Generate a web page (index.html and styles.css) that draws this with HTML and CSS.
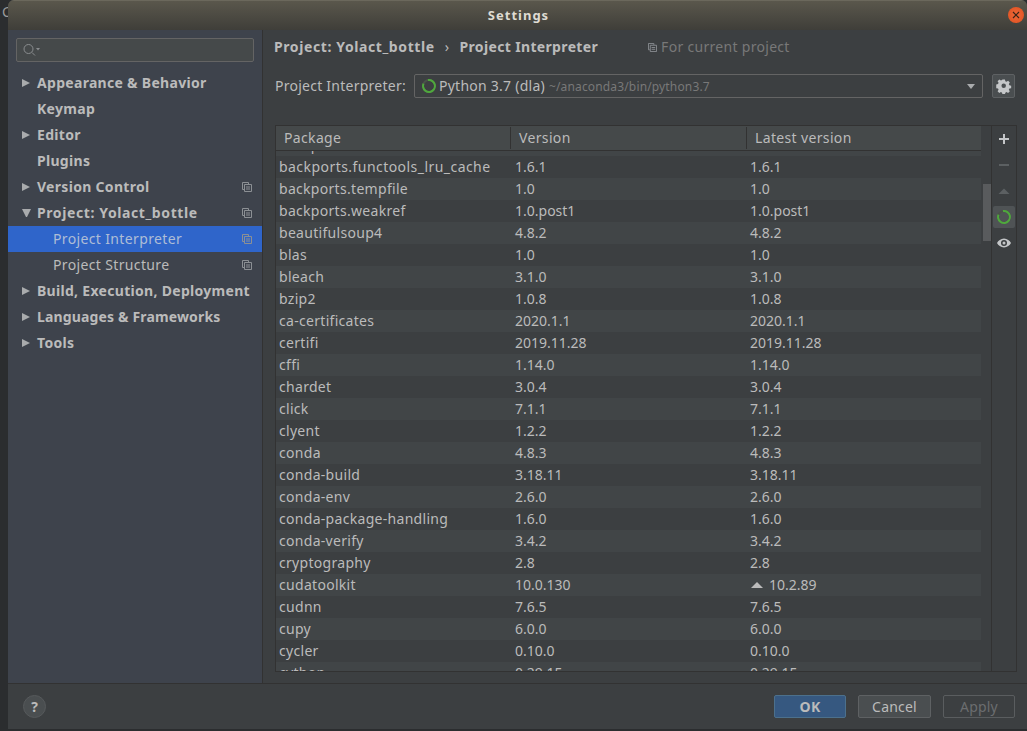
FILE: index.html
```html
<!DOCTYPE html>
<html lang="en">
<head>
<meta charset="utf-8">
<title>Settings</title>
<link rel="stylesheet" href="styles.css">
</head>
<body>
<svg class="defs" width="0" height="0">
  <symbol id="copy" viewBox="0 0 10 10"><path d="M0.5 0.5H6.5V2M2.5 2.5H9.5V9.5H2.5ZM0.5 0.5V7.5H2M4 5H8M4 7H8" fill="none" stroke="currentColor"/></symbol>
  <symbol id="spin" viewBox="0 0 16 16"><circle cx="8" cy="8" r="6" fill="none" stroke="#4b5249" stroke-width="2"/><circle cx="8" cy="8" r="6" fill="none" stroke="#4fa83d" stroke-width="2" stroke-dasharray="31 7" transform="rotate(-100 8 8)"/></symbol>
</svg>
<div class="backdrop"><span class="backdrop-letter">C</span></div>
<div class="dialog">
  <header class="titlebar">
    <span class="title">Settings</span>
    <span class="close"><svg width="8" height="8" viewBox="0 0 8 8"><path d="M1 1L7 7M7 1L1 7" stroke="#3a2418" stroke-width="1.2"/></svg></span>
  </header>
  <div class="main">
    <aside class="sidebar">
      <div class="search">
        <svg width="20" height="14" viewBox="0 0 20 14"><circle cx="6.5" cy="6" r="4.5" fill="none" stroke="#8a8d8f"/><path d="M10 9.5L13 12.5" stroke="#8a8d8f"/><path d="M14 5H18L16 7.5Z" fill="#8a8d8f"/></svg>
      </div>
      <nav class="tree">
        <div class="node"><i class="arrow"></i><b>Appearance &amp; Behavior</b></div>
        <div class="node"><i class="noarrow"></i><b>Keymap</b></div>
        <div class="node"><i class="arrow"></i><b>Editor</b></div>
        <div class="node"><i class="noarrow"></i><b>Plugins</b></div>
        <div class="node"><i class="arrow"></i><b>Version Control</b><svg class="copy"><use href="#copy"/></svg></div>
        <div class="node"><i class="arrow open"></i><b class="wide">Project: Yolact_bottle</b><svg class="copy"><use href="#copy"/></svg></div>
        <div class="node child selected"><span>Project Interpreter</span><svg class="copy"><use href="#copy"/></svg></div>
        <div class="node child"><span>Project Structure</span><svg class="copy"><use href="#copy"/></svg></div>
        <div class="node"><i class="arrow"></i><b>Build, Execution, Deployment</b></div>
        <div class="node"><i class="arrow"></i><b class="narrow">Languages &amp; Frameworks</b></div>
        <div class="node"><i class="arrow"></i><b>Tools</b></div>
      </nav>
    </aside>
    <section class="content">
      <div class="crumbs">
        <b class="wide">Project: Yolact_bottle</b><span class="sep">›</span><b>Project Interpreter</b>
        <span class="scope"><svg class="copy"><use href="#copy"/></svg>For current project</span>
      </div>
      <div class="interp">
        <label class="interp-label">Project Interpreter:</label>
        <div class="combo">
          <svg class="spin" width="16" height="16"><use href="#spin"/></svg>
          <span class="py">Python 3.7 (dla)</span><span class="path">~/anaconda3/bin/python3.7</span>
          <i class="caret"></i>
        </div>
        <button class="gear" type="button"><svg width="16" height="16" viewBox="0 0 16 16"><path fill-rule="evenodd" fill="#c4c6c8" d="M6.6 1h2.8l.4 2 1.3.6 1.8-1.1 1.9 1.9-1.1 1.8.6 1.4 2 .4v2.7l-2 .4-.6 1.4 1.1 1.8-1.9 1.9-1.8-1.1-1.3.6-.4 2H6.6l-.4-2-1.3-.6-1.8 1.1-1.9-1.9 1.1-1.8-.6-1.4-2-.4V6.600l2-.4.6-1.400-1.100-1.800 1.900-1.900 1.800 1.100 1.300-.6zM8 5.500a2.500 2.500 0 1 0 0 5 2.500 2.500 0 0 0 0-5z" transform="translate(.5 .5) scale(.9)"/></svg></button>
      </div>
      <div class="panel">
        <div class="table">
          <div class="thead">
            <div class="th">Package</div><div class="th">Version</div><div class="th">Latest version</div>
          </div>
          <div class="tbody">
            <div class="rows">
              <div class="row"><span>backports</span><span>1.0</span><span>1.0</span></div>
              <div class="row"><span class="long">backports.functools_lru_cache</span><span>1.6.1</span><span>1.6.1</span></div>
              <div class="row"><span>backports.tempfile</span><span>1.0</span><span>1.0</span></div>
              <div class="row"><span>backports.weakref</span><span>1.0.post1</span><span>1.0.post1</span></div>
              <div class="row"><span>beautifulsoup4</span><span>4.8.2</span><span>4.8.2</span></div>
              <div class="row"><span>blas</span><span>1.0</span><span>1.0</span></div>
              <div class="row"><span>bleach</span><span>3.1.0</span><span>3.1.0</span></div>
              <div class="row"><span>bzip2</span><span>1.0.8</span><span>1.0.8</span></div>
              <div class="row"><span>ca-certificates</span><span>2020.1.1</span><span>2020.1.1</span></div>
              <div class="row"><span>certifi</span><span>2019.11.28</span><span>2019.11.28</span></div>
              <div class="row"><span>cffi</span><span>1.14.0</span><span>1.14.0</span></div>
              <div class="row"><span>chardet</span><span>3.0.4</span><span>3.0.4</span></div>
              <div class="row"><span>click</span><span>7.1.1</span><span>7.1.1</span></div>
              <div class="row"><span>clyent</span><span>1.2.2</span><span>1.2.2</span></div>
              <div class="row"><span>conda</span><span>4.8.3</span><span>4.8.3</span></div>
              <div class="row"><span>conda-build</span><span>3.18.11</span><span>3.18.11</span></div>
              <div class="row"><span>conda-env</span><span>2.6.0</span><span>2.6.0</span></div>
              <div class="row"><span>conda-package-handling</span><span>1.6.0</span><span>1.6.0</span></div>
              <div class="row"><span>conda-verify</span><span>3.4.2</span><span>3.4.2</span></div>
              <div class="row"><span>cryptography</span><span>2.8</span><span>2.8</span></div>
              <div class="row"><span>cudatoolkit</span><span>10.0.130</span><span class="upgrade"><i class="up"></i>10.2.89</span></div>
              <div class="row"><span>cudnn</span><span>7.6.5</span><span>7.6.5</span></div>
              <div class="row"><span>cupy</span><span>6.0.0</span><span>6.0.0</span></div>
              <div class="row"><span>cycler</span><span>0.10.0</span><span>0.10.0</span></div>
              <div class="row"><span>cython</span><span>0.29.15</span><span>0.29.15</span></div>
            </div>
            <div class="thumb"></div>
          </div>
        </div>
        <div class="tools">
          <span class="tool"><svg width="14" height="14" viewBox="0 0 14 14"><path d="M7 2V12M2 7H12" stroke="#c4c6c8" stroke-width="2"/></svg></span>
          <span class="tool"><svg width="14" height="14" viewBox="0 0 14 14"><path d="M2 7H12" stroke="#5c6062" stroke-width="2"/></svg></span>
          <span class="tool"><svg width="14" height="14" viewBox="0 0 14 14"><path d="M1.500 10L7 4.500L12.500 10Z" fill="#5c6062"/></svg></span>
          <span class="tool active"><svg width="16" height="16"><use href="#spin"/></svg></span>
          <span class="tool"><svg width="14" height="14" viewBox="0 0 14 14"><path fill-rule="evenodd" fill="#c4c6c8" d="M7 2.500C3.800 2.500 1.200 4.800 0 7c1.200 2.200 3.800 4.500 7 4.500S12.800 9.200 14 7c-1.200-2.200-3.800-4.500-7-4.500zM7 4a3 3 0 1 1 0 6 3 3 0 0 1 0-6z"/><circle cx="7" cy="7" r="1.500" fill="#c4c6c8"/></svg></span>
        </div>
      </div>
    </section>
  </div>
  <footer class="footer">
    <span class="help">?</span>
    <div class="actions">
      <button class="btn primary" type="button">OK</button>
      <button class="btn cancel" type="button">Cancel</button>
      <button class="btn disabled" type="button">Apply</button>
    </div>
  </footer>
</div>
</body>
</html>
```
FILE: styles.css
```css
* { box-sizing: border-box; }
html, body { margin: 0; height: 100%; }
body {
  width: 1027px; height: 731px; overflow: hidden; display: flex;
  background: #2b2d2f; color: #bbbbbb;
  font-family: "Noto Sans", "Liberation Sans", sans-serif; font-size: 14px;
}
.defs { position: absolute; }
b { font-weight: 700; }
.backdrop { width: 8px; flex: none; overflow: hidden; }
.backdrop-letter { display: block; margin: 2px 0 0 2px; color: #9a9a9a; font-size: 14px; }
.dialog {
  flex: 1; height: 729px; display: flex; flex-direction: column;
  background: #3c3f41; border-radius: 6px 6px 0 0; overflow: hidden;
}
.titlebar {
  height: 30px; flex: none; position: relative; display: flex; align-items: center; justify-content: center;
  background: linear-gradient(#5a574c, #3f3e39); border-top: 1px solid #6b685c;
}
.title { font-weight: 700; font-size: 13px; letter-spacing: 1px; color: #dfdbd2; padding-bottom: 1px; margin-left: 2px; }
.close {
  position: absolute; right: 3px; top: 6px; width: 16px; height: 16px; border-radius: 50%;
  background: radial-gradient(#f0693a, #de4f1e); display: flex; align-items: center; justify-content: center;
}
.main { flex: 1; min-height: 0; display: flex; }
.sidebar { width: 255px; flex: none; background: #3e434c; border-right: 1px solid #323232; padding-top: 8px; }
.search {
  height: 24px; margin: 0 8px; background: #45494a; border: 1px solid #646464; border-radius: 2px;
  display: flex; align-items: center; padding-left: 5px;
}
.tree { margin-top: 8px; }
.node { height: 26px; display: flex; align-items: center; padding-left: 14px; color: #bbbbbb; position: relative; }
.node b, .node span { letter-spacing: .3px; padding-bottom: 2px; }
.node b.wide { letter-spacing: .6px; }
.node b.narrow { letter-spacing: .15px; }
.node span { letter-spacing: .36px; }
.arrow { width: 8px; height: 0; margin-right: 7px; border-style: solid; border-width: 4.500px 0 4.500px 8px; border-color: transparent transparent transparent #a9abad; flex: none; }
.arrow.open { border-width: 8px 4.500px 0; border-color: #a9abad transparent transparent; width: 9px; margin-right: 6px; }
.noarrow { width: 15px; flex: none; }
.child { padding-left: 45px; }
.selected { background: #2f65ca; color: #aebdd6; }
.copy { position: absolute; right: 10px; top: 8px; width: 10px; height: 10px; color: #8c9094; }
.content { flex: 1; min-width: 0; padding: 0 10px 11px 11px; display: flex; flex-direction: column; }
.crumbs { height: 34px; flex: none; display: flex; align-items: center; color: #bbbbbb; padding-bottom: 2px; letter-spacing: .35px; }
.crumbs .wide { letter-spacing: .6px; }
.sep { margin: 0 10px; }
.scope { position: relative; margin-left: 50px; padding-left: 13px; color: #787878; letter-spacing: .3px; }
.scope .copy { left: 0; right: auto; top: 6px; width: 9px; height: 9px; color: #8c9094; }
.interp { display: flex; align-items: center; height: 24px; margin-top: 10px; flex: none; }
.interp-label { width: 139px; margin-left: 1px; flex: none; padding-bottom: 2px; letter-spacing: .25px; }
.combo {
  width: 569px; height: 24px; border: 1px solid #646464; border-radius: 2px; display: flex; align-items: center;
  padding-left: 6px; position: relative; font-size: 14px;
}
.spin { flex: none; margin-right: 2px; }
.py { color: #bbbbbb; letter-spacing: .25px; padding-bottom: 2px; }
.path { color: #787878; font-size: 12px; margin-left: 4px; letter-spacing: .15px; }
.caret { position: absolute; right: 7px; top: 9px; border-style: solid; border-width: 5px 4.500px 0; border-color: #a9abad transparent transparent; }
.gear {
  width: 23px; height: 24px; margin-left: 9px; padding: 0; border: 1px solid #5e6163; border-radius: 2px;
  background: #4a4e50; display: flex; align-items: center; justify-content: center;
}
.panel {
  flex: 1; min-height: 0; margin: 27px 0 0 1px; display: flex; border: 1px solid #323232;
  width: 742px;
}
.table { width: 716px; flex: none; display: flex; flex-direction: column; border-right: 1px solid #323232; min-height: 0; }
.thead {
  height: 25px; flex: none; display: grid; grid-template-columns: 234px 236px 1fr;
  background: #45494a; border-bottom: 1px solid #323232; margin-right: 10px;
}
.th { padding-left: 7px; position: relative; line-height: 23px; color: #bbbbbb; letter-spacing: .35px; }
.th:first-child { padding-left: 8px; }
.th + .th { border-left: 1px solid #323232; padding-left: 8px; height: 22px; margin-top: 1px; line-height: 22px; }
.tbody { flex: 1; min-height: 0; overflow: hidden; position: relative; }
.rows { margin-top: -17px; margin-right: 10px; }
.row { height: 22px; display: grid; grid-template-columns: 234px 235px 1fr; align-items: start; line-height: 22px; color: #bbbbbb; background: #414547; padding-left: 3px; }
.row:nth-child(even) { background: #3c3f41; }
.row span:first-child { letter-spacing: .3px; }
.row span.long { letter-spacing: .45px; }
.row span + span { padding-left: 2px; }
.upgrade { display: flex; align-items: center; }
.up { margin: 0 6px 0 1px; border-style: solid; border-width: 0 6px 6px; border-color: transparent transparent #bbbbbb; }
.thumb { position: absolute; right: 0; top: 33px; width: 8px; height: 57px; background: #595b5d; }
.tools { flex: 1; display: flex; flex-direction: column; align-items: center; }
.tool { width: 22px; height: 26px; display: flex; align-items: center; justify-content: center; }
.tool.active { height: 22px; margin: 2px 0; background: #4f5355; border-radius: 2px; }
.footer { height: 46px; flex: none; border-top: 1px solid #323232; display: flex; align-items: center; justify-content: space-between; padding: 0 12px 0 15px; background: #3c3f41; }
.help { width: 23px; height: 23px; border-radius: 50%; background: #4a4e50; border: 1px solid #56595b; color: #bbbbbb; font-weight: 700; display: flex; align-items: center; justify-content: center; font-size: 14px; }
.actions { display: flex; gap: 12px; }
.btn {
  width: 72px; height: 23px; padding: 0; border: 1px solid #5e6163; border-radius: 2px; background: #4a4e50; color: #bbbbbb;
  font: inherit; letter-spacing: .2px;
}
.btn.cancel { width: 73px; }
.btn.primary { background: #365880; border-color: #4c708c; font-weight: 700; color: #bbbbbb; }
.btn.disabled { background: transparent; color: #6b6d6f; border-color: #5a5d5f; }
```
